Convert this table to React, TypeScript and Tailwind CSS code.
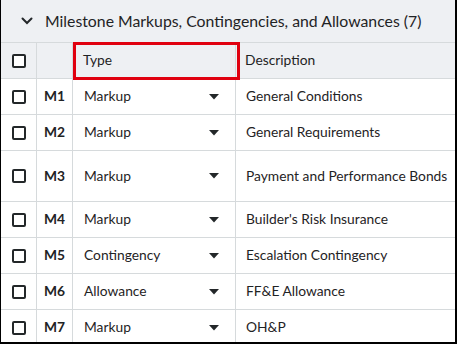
import React from "react";

type Row = { id: string; type: string; description: string; tall?: boolean };

const rows: Row[] = [
  { id: "M1", type: "Markup", description: "General Conditions" },
  { id: "M2", type: "Markup", description: "General Requirements" },
  { id: "M3", type: "Markup", description: "Payment and Performance Bonds", tall: true },
  { id: "M4", type: "Markup", description: "Builder's Risk Insurance" },
  { id: "M5", type: "Contingency", description: "Escalation Contingency" },
  { id: "M6", type: "Allowance", description: "FF&E Allowance" },
  { id: "M7", type: "Markup", description: "OH&P" },
];

const Checkbox = () => (
  <div className="w-[14px] h-[14px] rounded-[2px] border-2 border-[#232729] bg-white" />
);

const Caret = () => (
  <svg width="10" height="6" viewBox="0 0 10 6" className="shrink-0">
    <path d="M0 0 H10 L5 5.5 Z" fill="#232729" />
  </svg>
);

export default function App() {
  return (
    <div
      className="w-[457px] h-[344px] overflow-hidden bg-white border-l border-r-2 border-b-2 border-black text-[#1f2325]"
      style={{ fontFamily: "Lato, 'Noto Sans', sans-serif" }}
    >
      {/* group header */}
      <div className="h-[43px] bg-[#eef0f3] border-b border-[#d6dadc] flex items-center">
        <svg width="12" height="8" viewBox="0 0 12 8" className="ml-[20px] mr-[12px] shrink-0">
          <path d="M1.5 1.5 L6 6 L10.5 1.5" stroke="#232729" strokeWidth="2" fill="none" strokeLinecap="round" />
        </svg>
        <span className="text-[15.8px] whitespace-nowrap">
          Milestone Markups, Contingencies, and Allowances (7)
        </span>
      </div>

      {/* column header */}
      <div className="h-[36px] bg-[#eef0f3] border-b border-[#d6dadc] flex text-[13.8px]">
        <div className="w-[36px] shrink-0 border-r border-[#d6dadc] flex items-center justify-center">
          <Checkbox />
        </div>
        <div className="w-[36px] shrink-0 border-r border-[#d6dadc]" />
        <div className="relative w-[163px] shrink-0 border-r border-[#d6dadc] flex items-center pl-[10px]">
          Type
          <div className="absolute left-0 -top-[1px] w-[167px] h-[38px] border-[3px] border-[#e0000f]" />
        </div>
        <div className="flex-1 flex items-center pl-[9px]">Description</div>
      </div>

      {rows.map((r) => (
        <div
          key={r.id}
          className={`flex border-b border-[#d6dadc] text-[13.8px] whitespace-nowrap ${r.tall ? "h-[51px]" : "h-[36px]"}`}
        >
          <div className="w-[36px] shrink-0 border-r border-[#d6dadc] flex items-center justify-center">
            <Checkbox />
          </div>
          <div className="w-[36px] shrink-0 border-r border-[#d6dadc] flex items-center justify-center font-bold">
            {r.id}
          </div>
          <div className="w-[163px] shrink-0 border-r border-[#d6dadc] flex items-center justify-between pl-[11px] pr-[16px]">
            <span>{r.type}</span>
            <Caret />
          </div>
          <div className="flex-1 min-w-0 flex items-center pl-[10px]">{r.description}</div>
        </div>
      ))}
    </div>
  );
}
